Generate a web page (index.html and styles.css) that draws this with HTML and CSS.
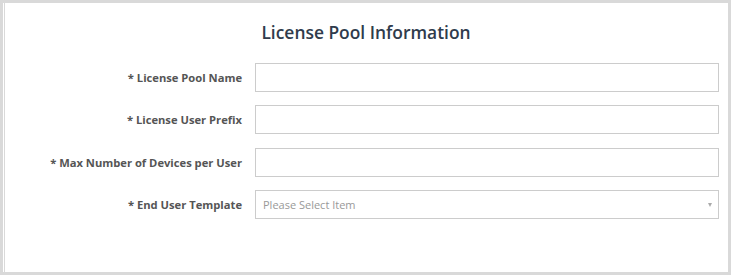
FILE: index.html
```html
<!DOCTYPE html>
<html>
<head>
	<title>License Pool Information</title>
	<link rel="stylesheet" href="styles.css">
</head>
<body>
	<div class="panel">
		<h1>License Pool Information</h1>
		<div class="form">
			<div class="row">
				<label for="pool-name">* License Pool Name</label>
				<input type="text" id="pool-name">
			</div>
			<div class="row">
				<label for="user-prefix">* License User Prefix</label>
				<input type="text" id="user-prefix">
			</div>
			<div class="row">
				<label for="max-devices">* Max Number of Devices per User</label>
				<input type="text" id="max-devices">
			</div>
			<div class="row">
				<label for="template">* End User Template</label>
				<div class="select" id="template">
					<span>Please Select Item</span>
					<span class="caret"></span>
				</div>
			</div>
		</div>
	</div>
</body>
</html>
```

FILE: styles.css
```css
		html, body {
			margin: 0;
			height: 100%;
		}

		body {
			background-color: #d9d9d9;
			padding: 3px;
			box-sizing: border-box;
			font-family: "Open Sans", sans-serif;
		}

		.panel {
			background-color: white;
			height: 100%;
			border-left: 1px solid #fff;
			box-shadow: inset 1px 0 0 #d9d9d9;
			box-sizing: border-box;
			padding-top: 18px;
		}

		h1 {
			font-size: 17.4px;
			font-weight: 600;
			color: #2f3b4c;
			text-align: center;
			margin: 0 0 20px 0;
			line-height: 22px;
		}

		.form {
			display: flex;
			flex-direction: column;
			gap: 13.4px;
		}

		.row {
			display: flex;
			align-items: center;
			height: 29px;
		}

		label {
			width: 251px;
			text-align: right;
			padding-right: 13px;
			box-sizing: border-box;
			font-size: 11.2px;
			font-weight: 700;
			color: #555;
		}

		input, .select {
			width: 464px;
			height: 29px;
			box-sizing: border-box;
			border: 1px solid #ccc;
			background: white;
			margin: 0;
			font-family: inherit;
		}

		.select {
			display: flex;
			align-items: center;
			justify-content: space-between;
			padding: 0 6px 0 7px;
			font-size: 11px;
			color: #999;
		}

		.caret {
			width: 0;
			height: 0;
			border-left: 2.5px solid transparent;
			border-right: 2.5px solid transparent;
			border-top: 4px solid #aaa;
		}
```
